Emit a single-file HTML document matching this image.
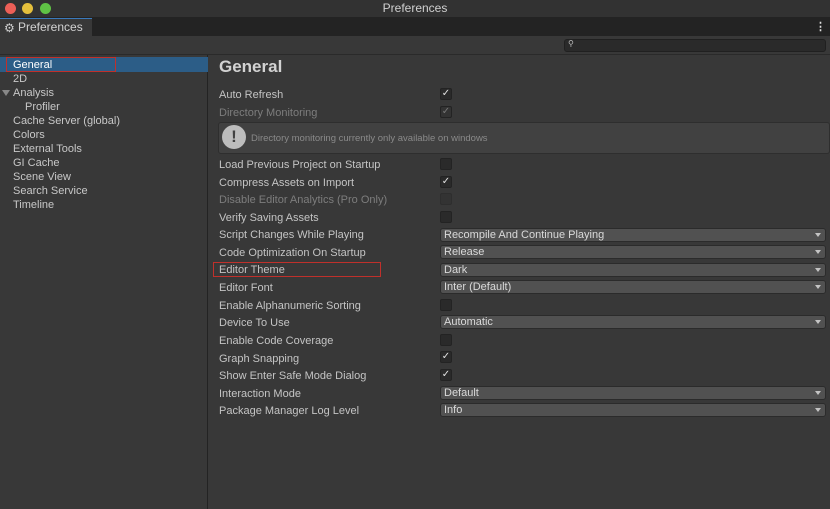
<!DOCTYPE html>
<html><head><style>
*{margin:0;padding:0;box-sizing:border-box}
body{width:830px;height:509px;background:#383838;font-family:"Liberation Sans",sans-serif;font-size:11px;color:#c4c4c4;position:relative;overflow:hidden}
.a{position:absolute}
.tb{left:0;top:0;width:830px;height:17px;background:#323232;text-align:center;color:#d0d0d0;font-size:12px;line-height:17px}
.dot{top:3px;width:11px;height:11px;border-radius:50%}
.tabbar{left:0;top:17px;width:830px;height:19px;background:#232323}
.tab{left:0;top:18px;width:92px;height:19px;background:#383838;border-top:1px solid #3a79bb;color:#d2d2d2;font-size:12px;line-height:17px;padding-left:18px}
.search{left:564px;top:39px;width:262px;height:13px;background:#2a2a2a;border:1px solid #202020;border-radius:3px}
.sep{left:0;top:54px;width:830px;height:1px;background:#2a2a2a}
.lp{left:0;top:55px;width:208px;height:454px;background:#383838;border-right:1px solid #232323}
.li{left:13px;font-size:11px;color:#c8c8c8;padding-top:1px}
.lbl{left:219px;font-size:11px;color:#c4c4c4;padding-top:1px}
.dis{color:#7d7d7d}
.cb{left:440px;width:12px;height:12px;background:#2a2a2a;border:1px solid #232323;border-radius:2px;color:#e0e0e0;font-size:10px;line-height:10px;text-align:center}
.dd{left:440px;width:386px;height:14px;background:#515151;border:1px solid #2b2b2b;border-radius:3px;color:#dadada;font-size:11px;line-height:13px;padding-left:3px}
.dd:after{content:"";position:absolute;right:4px;top:4px;border-left:3px solid transparent;border-right:3px solid transparent;border-top:4px solid #c4c4c4}
</style></head><body>
<div class="a tb">Preferences</div>
<div class="a dot" style="left:5px;background:#ec5f57"></div>
<div class="a dot" style="left:22px;background:#e5bf3c"></div>
<div class="a dot" style="left:40px;background:#5fc245"></div>
<div class="a tabbar"></div>
<div class="a tab">Preferences</div>
<div class="a" style="left:4px;top:21px;color:#cfcfcf;font-size:12px">⚙</div>
<div class="a" style="left:815px;top:20px;color:#ddd;font-size:11px;font-weight:bold">⋮</div>
<div class="a search"></div>
<div class="a" style="left:568px;top:39px;font-size:8px;color:#bbb">⚲</div>
<div class="a sep"></div>
<div class="a lp"></div>
<div class="a" style="left:0;top:57px;width:208px;height:15px;background:#2c5d87"></div>
<div class="a" style="left:6px;top:57px;width:110px;height:15px;border:1px solid #c0302b"></div>
<div class="a li" style="top:58px;color:#fff">General</div>
<div class="a li" style="top:72px">2D</div>
<div class="a" style="left:2px;top:90px;border-left:4px solid transparent;border-right:4px solid transparent;border-top:6px solid #888"></div>
<div class="a li" style="top:86px">Analysis</div>
<div class="a li" style="top:100px;left:25px">Profiler</div>
<div class="a li" style="top:114px">Cache Server (global)</div>
<div class="a li" style="top:128px">Colors</div>
<div class="a li" style="top:142px">External Tools</div>
<div class="a li" style="top:156px">GI Cache</div>
<div class="a li" style="top:170px">Scene View</div>
<div class="a li" style="top:184px">Search Service</div>
<div class="a li" style="top:198px">Timeline</div>
<div class="a" style="left:219px;top:57px;font-size:17px;font-weight:bold;color:#d2d2d2">General</div>

<div class="a lbl" style="top:88px">Auto Refresh</div><div class="a cb" style="top:88px">✓</div>
<div class="a lbl dis" style="top:106px">Directory Monitoring</div><div class="a cb" style="top:106px;color:#777;background:#333">✓</div>
<div class="a" style="left:218px;top:122px;width:612px;height:32px;background:#414141;border:1px solid #2e2e2e;border-radius:3px"></div>
<div class="a" style="left:222px;top:125px;width:24px;height:24px;border-radius:50%;background:#bdbdbd;color:#414141;font-weight:bold;font-size:17px;text-align:center;line-height:24px">!</div>
<div class="a" style="left:251px;top:133px;font-size:9.5px;color:#8a8a8a">Directory monitoring currently only available on windows</div>
<div class="a lbl" style="top:158px">Load Previous Project on Startup</div><div class="a cb" style="top:158px"></div>
<div class="a lbl" style="top:176px">Compress Assets on Import</div><div class="a cb" style="top:176px">✓</div>
<div class="a lbl dis" style="top:193px">Disable Editor Analytics (Pro Only)</div><div class="a cb" style="top:193px;background:#333;border-color:#2e2e2e"></div>
<div class="a lbl" style="top:211px">Verify Saving Assets</div><div class="a cb" style="top:211px"></div>
<div class="a lbl" style="top:228px">Script Changes While Playing</div><div class="a dd" style="top:228px">Recompile And Continue Playing</div>
<div class="a lbl" style="top:246px">Code Optimization On Startup</div><div class="a dd" style="top:245px">Release</div>
<div class="a" style="left:213px;top:262px;width:168px;height:15px;border:1px solid #c0302b"></div>
<div class="a lbl" style="top:263px">Editor Theme</div><div class="a dd" style="top:263px">Dark</div>
<div class="a lbl" style="top:281px">Editor Font</div><div class="a dd" style="top:280px">Inter (Default)</div>
<div class="a lbl" style="top:299px">Enable Alphanumeric Sorting</div><div class="a cb" style="top:299px"></div>
<div class="a lbl" style="top:316px">Device To Use</div><div class="a dd" style="top:315px">Automatic</div>
<div class="a lbl" style="top:334px">Enable Code Coverage</div><div class="a cb" style="top:334px"></div>
<div class="a lbl" style="top:352px">Graph Snapping</div><div class="a cb" style="top:351px">✓</div>
<div class="a lbl" style="top:369px">Show Enter Safe Mode Dialog</div><div class="a cb" style="top:369px">✓</div>
<div class="a lbl" style="top:387px">Interaction Mode</div><div class="a dd" style="top:386px">Default</div>
<div class="a lbl" style="top:404px">Package Manager Log Level</div><div class="a dd" style="top:403px">Info</div>
</body></html>
